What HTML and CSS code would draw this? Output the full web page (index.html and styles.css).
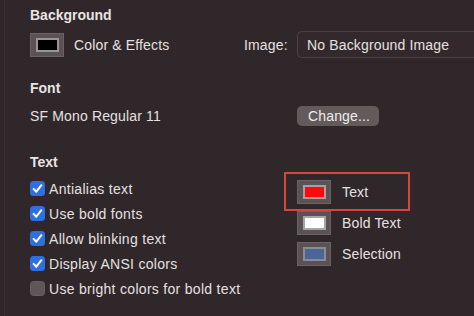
FILE: index.html
```html
<!DOCTYPE html>
<html>
<head>
    <title>Profile Text Settings</title>
    <meta name="viewport" content="width=device-width, initial-scale=1">
    <link rel="stylesheet" href="styles.css">
</head>
<body>
    <div class="pane">
        <section class="group">
            <h2 class="heading">Background</h2>
            <div class="bg-row">
                <div class="bg-color">
                    <span class="well"><span class="swatch swatch-black"></span></span>
                    <span>Color &amp; Effects</span>
                </div>
                <span class="label">Image:</span>
                <div class="popup">No Background Image</div>
            </div>
        </section>

        <section class="group group-font">
            <h2 class="heading">Font</h2>
            <div class="font-row">
                <span>SF Mono Regular 11</span>
                <div class="button">Change...</div>
            </div>
        </section>

        <section class="group group-text">
            <h2 class="heading">Text</h2>
            <div class="text-cols">
                <div class="checks">
                    <div class="check-row">
                        <span class="checkbox on"><svg viewBox="0 0 15 15" width="15" height="15"><polyline points="3.6,7.9 6.3,10.7 11.4,4.2"/></svg></span>
                        <span>Antialias text</span>
                    </div>
                    <div class="check-row">
                        <span class="checkbox on"><svg viewBox="0 0 15 15" width="15" height="15"><polyline points="3.6,7.9 6.3,10.7 11.4,4.2"/></svg></span>
                        <span>Use bold fonts</span>
                    </div>
                    <div class="check-row">
                        <span class="checkbox on"><svg viewBox="0 0 15 15" width="15" height="15"><polyline points="3.6,7.9 6.3,10.7 11.4,4.2"/></svg></span>
                        <span>Allow blinking text</span>
                    </div>
                    <div class="check-row">
                        <span class="checkbox on"><svg viewBox="0 0 15 15" width="15" height="15"><polyline points="3.6,7.9 6.3,10.7 11.4,4.2"/></svg></span>
                        <span>Display ANSI colors</span>
                    </div>
                    <div class="check-row">
                        <span class="checkbox"></span>
                        <span>Use bright colors for bold text</span>
                    </div>
                </div>

                <div class="colors">
                    <div class="color-row">
                        <span class="well"><span class="swatch swatch-red"></span></span>
                        <span>Text</span>
                    </div>
                    <div class="color-row">
                        <span class="well"><span class="swatch swatch-white"></span></span>
                        <span>Bold Text</span>
                    </div>
                    <div class="color-row">
                        <span class="well"><span class="swatch swatch-blue"></span></span>
                        <span>Selection</span>
                    </div>
                    <div class="highlight"></div>
                </div>
            </div>
        </section>
    </div>
</body>
</html>
```

FILE: styles.css
```css
html, body {
    margin: 0;
    background: #30272a;
    overflow: hidden;
}
body {
    width: 474px;
    height: 316px;
    font-family: "Liberation Sans", Arial, sans-serif;
    font-size: 14px;
    letter-spacing: 0.15px;
    color: #e5e0e0;
}
.pane {
    margin-left: 4px;
    height: 316px;
    padding: 5px 0 0 25px;
    border-left: 1px solid #3a3134;
}
.heading {
    margin: 0;
    height: 20px;
    display: flex;
    align-items: center;
    font-size: 14px;
    font-weight: bold;
    letter-spacing: 0;
    color: #e8e4e4;
}
.bg-row {
    display: flex;
    align-items: center;
    height: 27px;
    margin-top: 6px;
}
.bg-color {
    display: flex;
    align-items: center;
    gap: 10px;
    width: 214px;
    flex-shrink: 0;
}
.label {
    width: 53px;
    flex-shrink: 0;
}
/* popup continues past the window edge, so no right side */
.popup {
    flex: 1;
    height: 27px;
    box-sizing: border-box;
    padding-left: 9px;
    display: flex;
    align-items: center;
    background: #33292c;
    border: 1px solid #4b4245;
    border-right: none;
    border-radius: 5px 0 0 5px;
}
.well {
    width: 34px;
    height: 24px;
    box-sizing: border-box;
    display: flex;
    align-items: center;
    justify-content: center;
    flex-shrink: 0;
    background: #5a5254;
    border: 1px solid #6a6264;
}
.swatch {
    width: 23px;
    height: 14px;
    box-sizing: border-box;
    border: 2px solid #9a9495;
}
.swatch-black { background: #000; }
.swatch-red { background: #ff0a0a; border-color: #a8a0a0; }
.swatch-white { background: #fff; border-color: #a9a4a5; }
.swatch-blue { background: #4a6696; border-color: #8d8a90; }

.group-font { margin-top: 20px; }
.font-row {
    display: grid;
    grid-template-columns: 267px auto;
    align-items: center;
    height: 20px;
    margin-top: 8px;
}
.button {
    width: 82px;
    height: 20px;
    box-sizing: border-box;
    padding-left: 11px;
    display: flex;
    align-items: center;
    background: #625a5b;
    border-radius: 5px;
    color: #f0ecec;
}

.group-text { margin-top: 26px; }
.text-cols {
    display: grid;
    grid-template-columns: 267px auto;
    margin-top: 4px;
}
.check-row {
    display: flex;
    align-items: center;
    gap: 4px;
    height: 25px;
    letter-spacing: 0.3px;
}
.checkbox {
    width: 15px;
    height: 15px;
    flex-shrink: 0;
    box-sizing: border-box;
    border-radius: 3.5px;
    background: #5e5658;
    border: 1px solid #675f61;
}
.checkbox.on {
    background: #2f6fe2;
    border: none;
}
.checkbox svg {
    display: block;
}
.checkbox polyline {
    fill: none;
    stroke: #fff;
    stroke-width: 2;
    stroke-linecap: round;
    stroke-linejoin: round;
}
.colors {
    position: relative;
}
.color-row {
    display: flex;
    align-items: center;
    gap: 11px;
    height: 31px;
}
.highlight {
    position: absolute;
    left: -13px;
    top: -4px;
    width: 126px;
    height: 39px;
    box-sizing: border-box;
    border: 2px solid #d4483a;
}
```
